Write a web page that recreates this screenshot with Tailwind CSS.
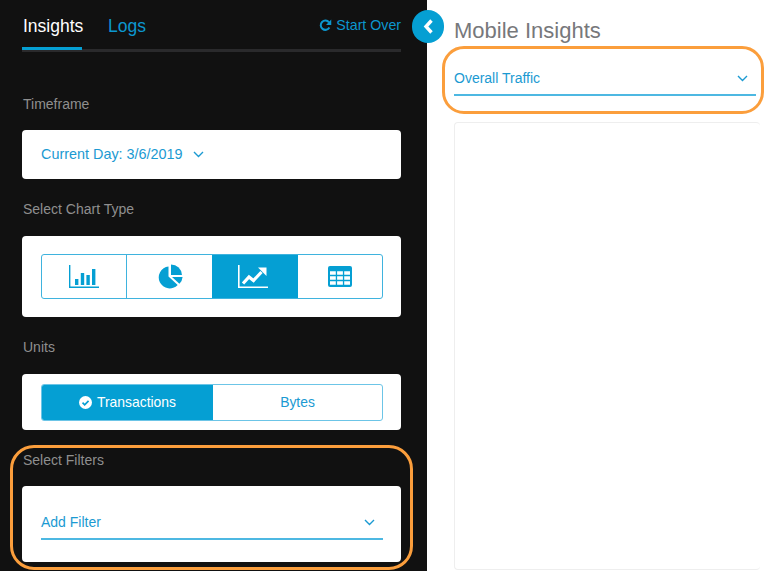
<!DOCTYPE html>
<html lang="en">
<head>
  <meta charset="UTF-8" />
  <title>Mobile Insights</title>
  <script src="https://cdn.jsdelivr.net/npm/@tailwindcss/browser@4"></script>
</head>
<body class="w-[765px] h-[571px] overflow-hidden bg-white font-['Liberation_Sans',Arial,sans-serif]">
  <div class="relative flex h-[571px]">
    <!-- sidebar -->
    <aside class="w-[427px] h-full shrink-0 bg-[#111111] pl-[22px] pr-[26px] pt-[14px]">
      <div class="flex items-start justify-between h-[38px] border-b-[3px] border-[#2a2a2c]">
        <div class="flex gap-[26px]">
          <div class="h-[36px] w-[60px] pl-px border-b-[3px] border-[#059fd3] text-[17.5px] leading-[25px] text-white">Insights</div>
          <div class="text-[17.5px] leading-[25px] text-[#0c97cf]">Logs</div>
        </div>
        <div class="flex items-center gap-[4px] text-[14.2px] leading-[22px] text-[#0c97cf]">
          <svg class="w-[13px] h-[13px]" viewBox="0 0 14 14" fill="none"><path d="M11.2 9.2A5 5 0 1 1 10.8 3.6" stroke="#0c97cf" stroke-width="2.2"/><path d="M13.2 0.6V6.4H7.6Z" fill="#0c97cf"/></svg>
          <span>Start Over</span>
        </div>
      </div>

      <div class="mt-[43px] pl-px text-[14px] leading-[18px] text-[#8f8f8f]">Timeframe</div>
      <div class="mt-[17px] h-[49px] rounded-[4px] bg-white flex items-center pl-[19px] gap-[10px] text-[14.4px] text-[#1b9ad2]">
        <span>Current Day: 3/6/2019</span>
        <svg class="w-[11px] h-[7px]" viewBox="0 0 11 7" fill="none"><path d="M1 1l4.5 4.5L10 1" stroke="#1b9ad2" stroke-width="1.4"/></svg>
      </div>

      <div class="mt-[21px] pl-px text-[14px] leading-[18px] text-[#8f8f8f]">Select Chart Type</div>
      <div class="mt-[18px] h-[81px] rounded-[4px] bg-white pl-[19px] pr-[18px] pt-[18px]">
        <div class="grid grid-cols-[85px_85px_86px_84px] h-[45px] rounded-[3px] border border-[#3fb3de] overflow-hidden">
          <div class="flex items-center justify-center border-r border-[#3fb3de]">
            <svg class="w-[30px] h-[23px]" viewBox="0 0 30 23" fill="#059fd3"><path d="M0 0h1.400v21.600H30V23H0z"/><path d="M6 14h3.400v6H6zM11.800 8h3.400v12h-3.400zM17.400 10h3.400v10h-3.400zM23 4h3.400v16H23z"/></svg>
          </div>
          <div class="flex items-center justify-center">
            <svg class="w-[26px] h-[25px]" viewBox="0 0 26 25" fill="#059fd3"><path d="M11.500 2.500a11 11 0 1 0 9.200 18.500l-9.200-8.500z"/><path d="M14 0.500a11 11 0 0 1 11 10.600H14z"/><path d="M15 13h10.600a11 11 0 0 1-3.200 6.800z"/></svg>
          </div>
          <div class="flex items-center justify-center bg-[#059fd3] pr-[4px]">
            <svg class="w-[30px] h-[23px]" viewBox="0 0 30 23"><path d="M0 0h1.600v21.400H30V23H0z" fill="#ffffff"/><path d="M5 18.500l6-6.500 4.500 3.500 8-8.500" fill="none" stroke="#ffffff" stroke-width="3.200"/><path d="M20 2.500h8.500V11z" fill="#ffffff"/></svg>
          </div>
          <div class="flex items-center justify-center">
            <svg class="w-[24px] h-[21px]" viewBox="0 0 24 21"><rect width="24" height="21" rx="2" fill="#059fd3"/><path d="M2 5.200h5.800v3.600H2zM9.100 5.200h5.800v3.600H9.100zM16.200 5.200H22v3.600h-5.800zM2 10.200h5.800v3.600H2zM9.100 10.200h5.800v3.600H9.100zM16.200 10.200H22v3.600h-5.800zM2 15.200h5.800v3.600H2zM9.100 15.200h5.800v3.600H9.100zM16.200 15.200H22v3.600h-5.800z" fill="#ffffff"/></svg>
          </div>
        </div>
      </div>

      <div class="mt-[21px] pl-px text-[14px] leading-[18px] text-[#8f8f8f]">Units</div>
      <div class="mt-[18px] h-[56px] rounded-[4px] bg-white pl-[19px] pr-[18px] pt-[10px]">
        <div class="flex h-[37px] rounded-[3px] border border-[#6cc5e7] overflow-hidden text-[13.9px]">
          <div class="w-[171px] bg-[#059fd3] text-white flex items-center justify-center gap-[5px]">
            <svg class="w-[13px] h-[13px]" viewBox="0 0 14 14"><circle cx="7" cy="7" r="7" fill="#ffffff"/><path d="M3.800 7.200l2.300 2.300 4.200-4.300" fill="none" stroke="#059fd3" stroke-width="1.800"/></svg>
            <span>Transactions</span>
          </div>
          <div class="flex-1 flex items-center justify-center text-[#1b9ad2]">Bytes</div>
        </div>
      </div>

      <div class="mt-[21px] pl-px text-[14px] leading-[18px] text-[#8f8f8f]">Select Filters</div>
      <div class="mt-[17px] h-[76px] rounded-[4px] bg-white pl-[19px] pr-[18px] pt-[19px]">
        <div class="flex items-center justify-between h-[35px] pt-px pr-[8px] border-b-2 border-[#4db8e2] text-[14px] text-[#1b9ad2]">
          <span>Add Filter</span>
          <svg class="w-[11px] h-[7px]" viewBox="0 0 11 7" fill="none"><path d="M1 1l4.500 4.500L10 1" stroke="#1b9ad2" stroke-width="1.400"/></svg>
        </div>
      </div>
    </aside>

    <!-- main panel -->
    <main class="flex-1 min-w-0 pl-[27px] pr-[9px] pt-[16px]">
      <h1 class="text-[22px] leading-[30px] text-[#77787b]">Mobile Insights</h1>
      <div class="mt-[18px] flex items-center justify-between h-[32px] pb-[2px] pr-[8px] border-b-2 border-[#4db8e2] text-[14px] text-[#1b9ad2]">
        <span>Overall Traffic</span>
        <svg class="w-[11px] h-[7px]" viewBox="0 0 11 7" fill="none"><path d="M1 1l4.500 4.500L10 1" stroke="#1b9ad2" stroke-width="1.400"/></svg>
      </div>
      <div class="mt-[26px] h-[448px] w-[306px] rounded-[4px] border border-r-0 border-[#eeeeee]"></div>
    </main>

    <!-- collapse button over the sidebar edge -->
    <div class="absolute left-[412px] top-[10px] w-[32px] h-[33px] rounded-full bg-[#059fd3] flex items-center justify-center">
      <svg class="w-[11px] h-[15px]" viewBox="0 0 11 15" fill="none"><path d="M8.500 1.500L3 7.500l5.500 6" stroke="#ffffff" stroke-width="3.400"/></svg>
    </div>

    <!-- orange callouts -->
    <div class="absolute left-[10px] top-[445px] w-[403px] h-[125px] rounded-[24px] border-[3px] border-[#fb9e3c]"></div>
    <div class="absolute left-[442px] top-[46px] w-[322px] h-[68px] rounded-[22px] border-[3px] border-[#fb9e3c]"></div>
  </div>
</body>
</html>
